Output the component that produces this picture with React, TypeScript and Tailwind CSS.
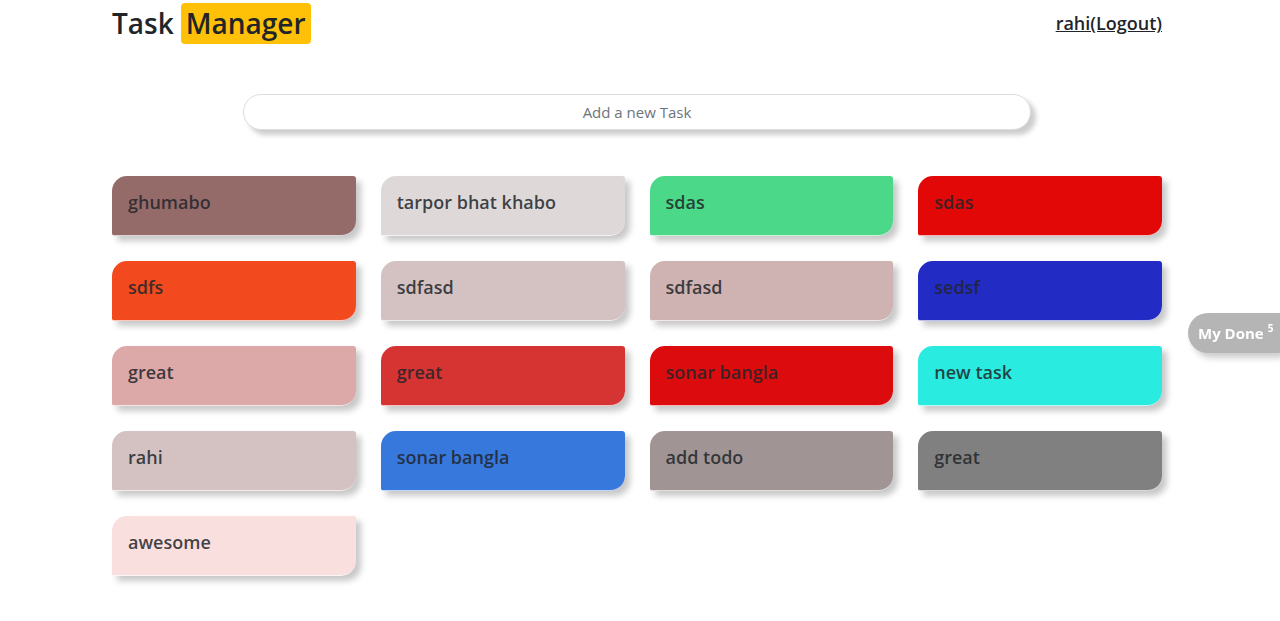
const tasks: { title: string; color: string }[] = [
  { title: "ghumabo", color: "bg-[#956b6a]" },
  { title: "tarpor bhat khabo", color: "bg-[#ded8d8]" },
  { title: "sdas", color: "bg-[#4bd888]" },
  { title: "sdas", color: "bg-[#e20808]" },
  { title: "sdfs", color: "bg-[#f3491f]" },
  { title: "sdfasd", color: "bg-[#d4c1c1]" },
  { title: "sdfasd", color: "bg-[#cfb2b2]" },
  { title: "sedsf", color: "bg-[#232bc5]" },
  { title: "great", color: "bg-[#dca8a8]" },
  { title: "great", color: "bg-[#d63333]" },
  { title: "sonar bangla", color: "bg-[#dc0c0e]" },
  { title: "new task", color: "bg-[#2aebe0]" },
  { title: "rahi", color: "bg-[#d4c1c1]" },
  { title: "sonar bangla", color: "bg-[#3778dd]" },
  { title: "add todo", color: "bg-[#a09594]" },
  { title: "great", color: "bg-[#808080]" },
  { title: "awesome", color: "bg-[#fadfdf]" },
];

export default function App() {
  return (
    <div className="min-h-screen bg-white font-['Open_Sans',sans-serif] text-[#212529]">
      <div className="ml-[112px] w-[1050px]">
        {/* header */}
        <div className="flex items-center justify-between pt-[3px]">
          <h1 className="flex items-center text-[28px] leading-[41px] font-semibold">
            <span>Task</span>
            <span className="ml-[7px] rounded-[4px] bg-[#ffc107] px-[5px]">Manager</span>
          </h1>
          <a href="#" className="text-[18px] font-semibold underline">
            rahi(Logout)
          </a>
        </div>

        {/* new task input */}
        <div className="mt-[50px] flex justify-center">
          <input
            type="text"
            placeholder="Add a new Task"
            className="h-[36px] w-[788px] rounded-full border border-[#ddd] bg-white text-center text-[15px] shadow-[5px_5px_5px_rgba(0,0,0,0.2)] outline-none placeholder:text-[#6c757d]"
          />
        </div>

        {/* task grid */}
        <div className="mt-[46px] grid grid-cols-4 gap-[25px]">
          {tasks.map((t, i) => (
            <div
              key={i}
              className={`${t.color} h-[60px] rounded-tl-[15px] rounded-tr-[3px] rounded-br-[15px] rounded-bl-[2px] border-b border-white/70 px-[16px] pt-[13px] shadow-[5px_5px_6px_rgba(0,0,0,0.22)]`}
            >
              <span className="text-[18px] font-semibold text-[#212529]/85">{t.title}</span>
            </div>
          ))}
        </div>
      </div>

      {/* done toggle */}
      <button className="fixed top-[313px] right-0 flex h-[40px] w-[92px] items-center rounded-l-full bg-[#b5b5b5] pl-[10px] text-[15px] font-bold text-white shadow-[4px_5px_6px_rgba(0,0,0,0.2)]">
        My Done
        <sup className="ml-[4px] text-[10px]">5</sup>
      </button>
    </div>
  );
}
